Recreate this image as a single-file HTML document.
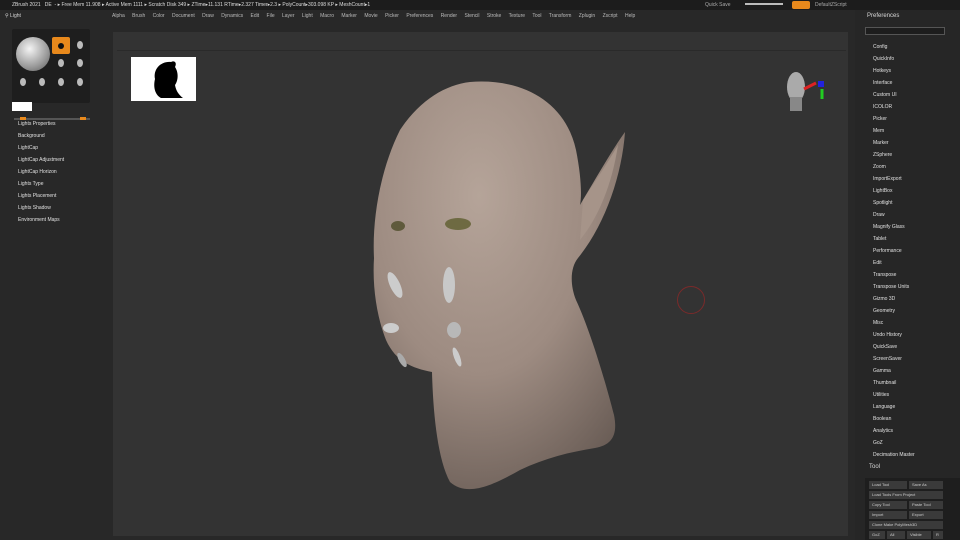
<!DOCTYPE html>
<html><head><meta charset="utf-8"><style>
*{margin:0;padding:0;box-sizing:border-box}
html,body{width:960px;height:540px}
body{background:#282828;font-family:"Liberation Sans",sans-serif;color:#d8d8d8;overflow:hidden;position:relative;font-size:5px}
.abs{position:absolute}
#title{left:0;top:0;width:960px;height:10px;background:#1c1c1c;font-size:5px;line-height:10px;padding-left:12px;color:#ddd;white-space:nowrap}
#menu{left:112px;top:10px;width:740px;height:12px;font-size:5px;line-height:12px;color:#bbb;word-spacing:6px;white-space:nowrap}
#left{left:0;top:10px;width:110px;height:530px;background:#282828}
#view{left:113px;top:32px;width:735px;height:504px;background:#333333}
#right{left:855px;top:10px;width:105px;height:530px;background:#262626}
.item{font-size:5px;color:#e0e0e0;height:12px;line-height:12px}
.btn{position:absolute;height:8px;background:#3a3a3a;font-size:4px;color:#ccc;line-height:8px;padding-left:3px}
.dot{position:absolute;width:6px;height:8px;border-radius:50%;background:#bbb}
</style></head><body>
<div class="abs" id="title">ZBrush 2021 &nbsp; DE &nbsp;- ▸ Free Mem 11.908 ▸ Active Mem 1111 ▸ Scratch Disk 349 ▸ ZTime▸11.131 RTime▸2.327 Timer▸2.3 ▸ PolyCount▸303.098 KP ▸ MeshCount▸1
<span style="position:absolute;left:705px;color:#aaa">Quick Save</span>
<span style="position:absolute;left:745px;top:3px;width:38px;height:2px;background:#bbb"></span>
<span style="position:absolute;left:792px;top:1px;width:18px;height:8px;background:#e8891c;border-radius:2px"></span>
<span style="position:absolute;left:815px;color:#aaa">DefaultZScript</span></div>
<div class="abs" id="menu">Alpha Brush Color Document Draw Dynamics Edit File Layer Light Macro Marker Movie Picker Preferences Render Stencil Stroke Texture Tool Transform Zplugin Zscript Help</div>
<div class="abs" id="left">
<div style="position:absolute;left:5px;top:3px;font-size:5px">⚲ Light</div>
<div style="position:absolute;left:12px;top:19px;width:78px;height:74px;background:#1e1e1e;border-radius:2px"></div>
<div style="position:absolute;left:16px;top:27px;width:34px;height:34px;border-radius:50%;background:radial-gradient(circle at 40% 35%,#f4f4f4,#9a9a9a 60%,#555)"></div>
<div style="position:absolute;left:52px;top:27px;width:18px;height:17px;background:#e8891c;border-radius:2px"></div>
<div style="position:absolute;left:58px;top:33px;width:6px;height:6px;background:#111;border-radius:50%"></div>
<div class="dot" style="left:77px;top:31px"></div>
<div class="dot" style="left:58px;top:49px"></div><div class="dot" style="left:77px;top:49px"></div>
<div class="dot" style="left:20px;top:68px"></div><div class="dot" style="left:39px;top:68px"></div><div class="dot" style="left:58px;top:68px"></div><div class="dot" style="left:77px;top:68px"></div>
<div style="position:absolute;left:12px;top:92px;width:20px;height:9px;background:#fff"></div>
<div style="position:absolute;left:14px;top:108px;width:76px;height:2px;background:#555"></div>
<div style="position:absolute;left:20px;top:107px;width:6px;height:3px;background:#e8891c"></div>
<div style="position:absolute;left:80px;top:107px;width:6px;height:3px;background:#e8891c"></div>
<div style="position:absolute;left:18px;top:108px">
<div class="item">Lights Properties</div><div class="item">Background</div><div class="item">LightCap</div><div class="item">LightCap Adjustment</div><div class="item">LightCap Horizon</div><div class="item">Lights Type</div><div class="item">Lights Placement</div><div class="item">Lights Shadow</div><div class="item">Environment Maps</div></div>
</div>
<div class="abs" id="view">
<div style="position:absolute;left:4px;top:18px;width:729px;height:1px;background:#2a2a2a"></div>
<div style="position:absolute;left:18px;top:25px;width:65px;height:44px;background:#fff"></div>
<svg style="position:absolute;left:18px;top:25px" width="65" height="44"><path d="M30 41 C24 38 22 30 24 22 C22 12 30 4 40 5 C44 3 46 6 44 10 C48 16 47 24 44 28 C45 34 48 38 52 41 Z" fill="#000"/></svg>
<svg style="position:absolute;left:665px;top:25px" width="50" height="60"><ellipse cx="18" cy="30" rx="9" ry="15" fill="#aaa"/><rect x="12" y="40" width="12" height="14" fill="#888"/><path d="M26 32 L38 26" stroke="#d22" stroke-width="3"/><rect x="40" y="24" width="6" height="6" fill="#22d"/><path d="M44 32 L44 42" stroke="#2c2" stroke-width="3"/></svg>
<div style="position:absolute;left:564px;top:254px;width:28px;height:28px;border:1px solid #7a2a2a;border-radius:50%"></div>
</div>
<svg class="abs" style="left:0;top:0" width="960" height="540">
<defs><radialGradient id="sk" cx="0.42" cy="0.28" r="0.8"><stop offset="0" stop-color="#b5a499"/><stop offset="0.55" stop-color="#9d8b81"/><stop offset="1" stop-color="#6a5d56"/></radialGradient></defs>
<path d="M470 82 C520 78 565 100 576 150 C581 175 582 195 580 205 C595 180 612 150 625 132 C622 175 605 225 578 258 C570 268 570 285 576 300 C590 330 605 380 614 415 C618 435 612 445 595 448 C570 452 545 458 520 470 C495 484 468 498 450 482 C437 458 433 410 432 372 C412 368 396 362 386 340 C378 320 372 290 374 258 C372 220 380 170 400 130 C420 100 445 85 470 82 Z" fill="url(#sk)"/>
<path d="M583 200 C595 182 608 162 618 145 C612 185 598 218 580 240 Z" fill="#a69489"/>
<ellipse cx="458" cy="224" rx="13" ry="6" fill="#6e6a42"/>
<ellipse cx="398" cy="226" rx="7" ry="5" fill="#5f5a3c"/>
<ellipse cx="395" cy="285" rx="5" ry="14" fill="#ccc" transform="rotate(-25 395 285)"/>
<ellipse cx="449" cy="285" rx="6" ry="18" fill="#c8c8c8"/>
<ellipse cx="391" cy="328" rx="8" ry="5" fill="#ccc"/>
<ellipse cx="454" cy="330" rx="7" ry="8" fill="#b8b8b8"/>
<ellipse cx="457" cy="357" rx="3" ry="10" fill="#ccc" transform="rotate(-20 457 357)"/>
<ellipse cx="402" cy="360" rx="3" ry="8" fill="#aaa" transform="rotate(-30 402 360)"/>
</svg>
<div class="abs" id="right">
<div style="position:absolute;left:12px;top:3px;font-size:6px">Preferences</div>
<div style="position:absolute;left:10px;top:17px;width:80px;height:8px;border:1px solid #555;background:#1d1d1d"></div>
<div style="position:absolute;left:18px;top:31px">
<div class="item">Config</div><div class="item">QuickInfo</div><div class="item">Hotkeys</div><div class="item">Interface</div><div class="item">Custom UI</div><div class="item">ICOLOR</div><div class="item">Picker</div><div class="item">Mem</div><div class="item">Marker</div><div class="item">ZSphere</div><div class="item">Zoom</div><div class="item">ImportExport</div><div class="item">LightBox</div><div class="item">Spotlight</div><div class="item">Draw</div><div class="item">Magnify Glass</div><div class="item">Tablet</div><div class="item">Performance</div><div class="item">Edit</div><div class="item">Transpose</div><div class="item">Transpose Units</div><div class="item">Gizmo 3D</div><div class="item">Geometry</div><div class="item">Misc</div><div class="item">Undo History</div><div class="item">QuickSave</div><div class="item">ScreenSaver</div><div class="item">Gamma</div><div class="item">Thumbnail</div><div class="item">Utilities</div><div class="item">Language</div><div class="item">Boolean</div><div class="item">Analytics</div><div class="item">GoZ</div><div class="item">Decimation Master</div></div>
<div style="position:absolute;left:14px;top:454px;font-size:6px">Tool</div>
<div style="position:absolute;left:10px;top:468px;width:95px;height:62px;background:#1e1e1e"></div>
<div class="btn" style="left:14px;top:471px;width:38px">Load Tool</div><div class="btn" style="left:54px;top:471px;width:34px">Save As</div>
<div class="btn" style="left:14px;top:481px;width:74px">Load Tools From Project</div>
<div class="btn" style="left:14px;top:491px;width:38px">Copy Tool</div><div class="btn" style="left:54px;top:491px;width:34px">Paste Tool</div>
<div class="btn" style="left:14px;top:501px;width:38px">Import</div><div class="btn" style="left:54px;top:501px;width:34px">Export</div>
<div class="btn" style="left:14px;top:511px;width:74px">Clone Make PolyMesh3D</div>
<div class="btn" style="left:14px;top:521px;width:16px">GoZ</div><div class="btn" style="left:32px;top:521px;width:18px">All</div><div class="btn" style="left:52px;top:521px;width:24px">Visible</div><div class="btn" style="left:78px;top:521px;width:10px">R</div>
</div>
</body></html>
